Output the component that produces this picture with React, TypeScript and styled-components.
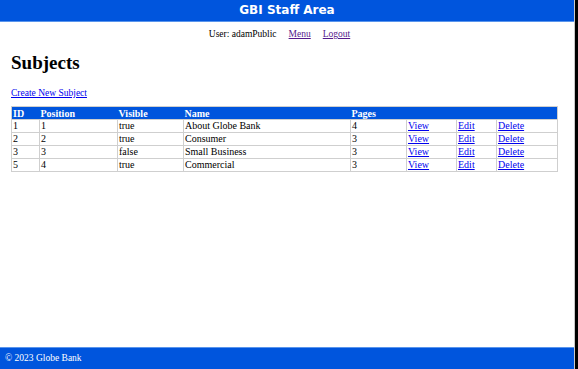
import React from 'react';
import styled, { createGlobalStyle } from 'styled-components';

type Subject = {
  id: number;
  position: number;
  visible: boolean;
  name: string;
  pages: number;
};

const subjects: Subject[] = [
  { id: 1, position: 1, visible: true, name: 'About Globe Bank', pages: 4 },
  { id: 2, position: 2, visible: true, name: 'Consumer', pages: 3 },
  { id: 3, position: 3, visible: false, name: 'Small Business', pages: 3 },
  { id: 5, position: 4, visible: true, name: 'Commercial', pages: 3 },
];

// column widths in px, measured off the screenshot
const columns = [28, 78, 66, 167, 56, 50, 40, 61];

const GlobalStyle = createGlobalStyle`
  html, body {
    margin: 0;
    padding: 0;
    background: #000;
  }
  body {
    font-family: "Liberation Serif", "Times New Roman", serif;
    font-size: 9.5px;
  }
`;

const Page = styled.div`
  width: 574px;
  min-height: 369px;
  background: #fff;
  border-right: 1px solid #c9c9c9;
  display: flex;
  flex-direction: column;
`;

const Header = styled.header`
  height: 21px;
  line-height: 21px;
  background: #0055dd;
  border-bottom: 1px solid #5a95ec;
  color: #fff;
  text-align: center;
  font-family: "DejaVu Sans", Verdana, sans-serif;
  font-weight: bold;
  font-size: 12px;
`;

const Navigation = styled.nav`
  text-align: center;
  padding: 6px 15px 0 0;
  line-height: 12px;
  color: #000;
`;

const NavItem = styled.span`
  margin: 0 6px;
`;

const Link = styled.a<{ $visited?: boolean }>`
  color: ${p => (p.$visited ? '#551a8b' : '#0000ee')};
  text-decoration: underline;
  cursor: pointer;
`;

const Main = styled.main`
  padding: 0 11px;
  flex: 1;
`;

const Title = styled.h1`
  font-size: 19px;
  font-weight: bold;
  margin: 12px 0 13px;
  line-height: 22px;
`;

const Actions = styled.div`
  margin-bottom: 7px;
  line-height: 12px;
`;

const Table = styled.table`
  width: 546px;
  table-layout: fixed;
  border-collapse: collapse;
  border: 1px solid #cfcfcf;
  font-size: 10px;
`;

const HeadCell = styled.th`
  background: #0055dd;
  color: #fff;
  font-weight: bold;
  text-align: left;
  padding: 0 1px;
  height: 12px;
  line-height: 11px;
  border: none;
  overflow: hidden;
  white-space: nowrap;
`;

const Cell = styled.td`
  padding: 0 1px;
  height: 12px;
  line-height: 12px;
  border: 1px solid #cfcfcf;
  white-space: nowrap;
  overflow: hidden;
`;

const Footer = styled.footer`
  height: 21px;
  line-height: 21px;
  background: #0055dd;
  border-top: 1px solid #5a95ec;
  color: #fff;
  padding-left: 5px;
`;

const App: React.FC = () => {
  return (
    <>
      <GlobalStyle />
      <Page>
        <Header>GBI Staff Area</Header>
        <Navigation>
          <NavItem>User: adamPublic</NavItem>
          <NavItem>
            <Link $visited>Menu</Link>
          </NavItem>
          <NavItem>
            <Link $visited>Logout</Link>
          </NavItem>
        </Navigation>

        <Main>
          <Title>Subjects</Title>
          <Actions>
            <Link>Create New Subject</Link>
          </Actions>

          <Table>
            <colgroup>
              {columns.map((w, i) => (
                <col key={i} style={{ width: w }} />
              ))}
            </colgroup>
            <thead>
              <tr>
                <HeadCell>ID</HeadCell>
                <HeadCell>Position</HeadCell>
                <HeadCell>Visible</HeadCell>
                <HeadCell>Name</HeadCell>
                <HeadCell>Pages</HeadCell>
                <HeadCell>&nbsp;</HeadCell>
                <HeadCell>&nbsp;</HeadCell>
                <HeadCell>&nbsp;</HeadCell>
              </tr>
            </thead>
            <tbody>
              {subjects.map(subject => (
                <tr key={subject.id}>
                  <Cell>{subject.id}</Cell>
                  <Cell>{subject.position}</Cell>
                  <Cell>{subject.visible ? 'true' : 'false'}</Cell>
                  <Cell>{subject.name}</Cell>
                  <Cell>{subject.pages}</Cell>
                  <Cell>
                    <Link>View</Link>
                  </Cell>
                  <Cell>
                    <Link>Edit</Link>
                  </Cell>
                  <Cell>
                    <Link>Delete</Link>
                  </Cell>
                </tr>
              ))}
            </tbody>
          </Table>
        </Main>

        <Footer>&copy; 2023 Globe Bank</Footer>
      </Page>
    </>
  );
};

export default App;
